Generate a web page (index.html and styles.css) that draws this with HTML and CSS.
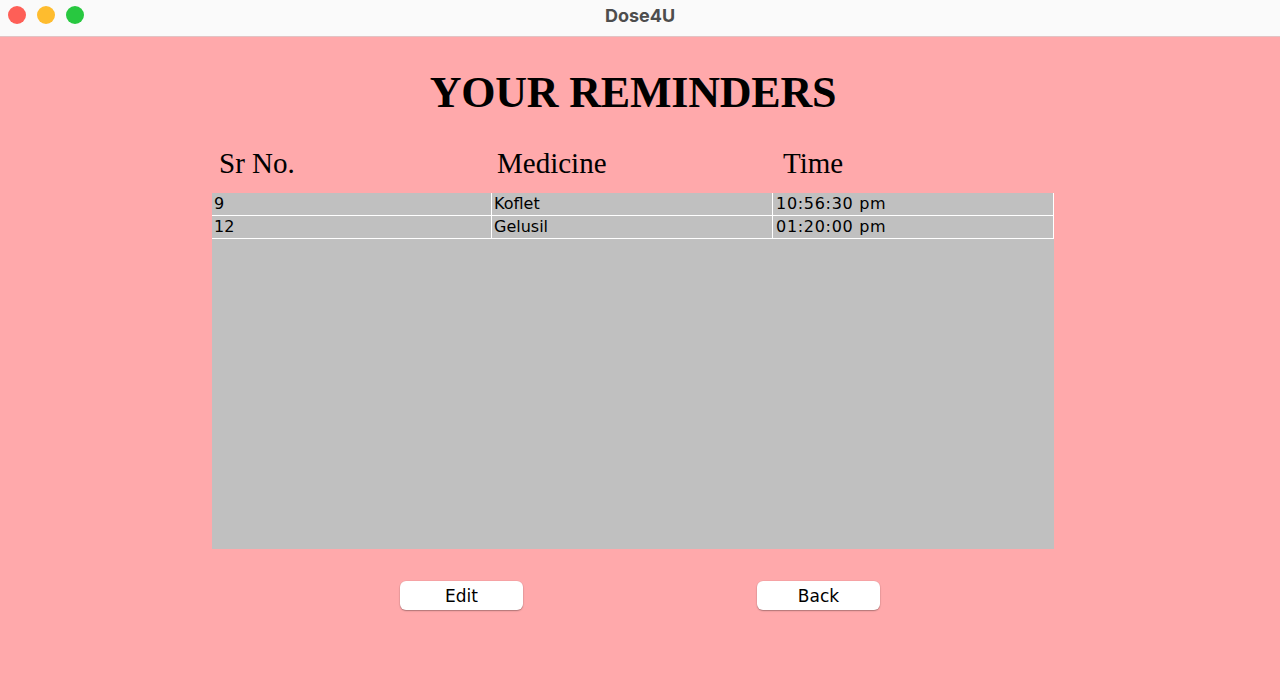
FILE: index.html
```html
<!DOCTYPE html>
<html lang="en">
<head>
<meta charset="utf-8">
<title>Dose4U</title>
<link rel="stylesheet" href="styles.css">
</head>
<body>
<div class="window">
  <header class="titlebar">
    <div class="lights">
      <span class="light red"></span>
      <span class="light yellow"></span>
      <span class="light green"></span>
    </div>
    <div class="app-title">Dose4U</div>
  </header>
  <main class="content">
    <section class="panel">
      <h1 class="heading">YOUR REMINDERS</h1>
      <div class="col-heads">
        <div class="col-head">Sr No.</div>
        <div class="col-head">Medicine</div>
        <div class="col-head">Time</div>
      </div>
      <div class="table">
        <div class="row">
          <div class="cell">9</div>
          <div class="cell">Koflet</div>
          <div class="cell time">10:56:30 pm</div>
        </div>
        <div class="row">
          <div class="cell">12</div>
          <div class="cell">Gelusil</div>
          <div class="cell time">01:20:00 pm</div>
        </div>
      </div>
    </section>
    <div class="actions">
      <button class="btn">Edit</button>
      <button class="btn">Back</button>
    </div>
  </main>
</div>
</body>
</html>
```
FILE: styles.css
```css
* { box-sizing: border-box; }
html, body { margin: 0; padding: 0; }
body {
  width: 1280px;
  height: 700px;
  overflow: hidden;
  background: #ffa9ab;
  font-family: "DejaVu Sans", sans-serif;
}
.window {
  display: flex;
  flex-direction: column;
  height: 700px;
}
.titlebar {
  position: relative;
  height: 37px;
  flex: 0 0 37px;
  background: #fafafa;
  border-bottom: 1px solid #e2c3c4;
  display: flex;
  align-items: center;
  justify-content: center;
}
.lights {
  position: absolute;
  left: 8px;
  top: 6px;
  display: flex;
  gap: 11px;
}
.light {
  width: 18px;
  height: 18px;
  border-radius: 50%;
  display: block;
}
.red { background: #fe5f57; }
.yellow { background: #febc2e; }
.green { background: #28c840; }
.app-title {
  font-family: "Inter", "Roboto", sans-serif;
  font-weight: 700;
  font-size: 18px;
  color: #4d4d4d;
  margin-top: -5px;
}
.content {
  flex: 1;
  padding-top: 25px;
}
.panel {
  width: 842px;
  margin-left: 212px;
}
.heading {
  margin: 0;
  padding-top: 1px;
  height: 60px;
  line-height: 60px;
  text-align: center;
  font-family: "Liberation Serif", serif;
  font-weight: 700;
  font-size: 44px;
  letter-spacing: -0.2px;
  color: #000;
}
.col-heads {
  margin-top: 23px;
  display: grid;
  grid-template-columns: 278px 286px 1fr;
  padding-left: 7px;
  height: 36px;
}
.col-head {
  font-family: "Liberation Serif", serif;
  font-size: 29px;
  line-height: 36px;
  color: #000;
}
.table {
  margin-top: 12px;
  height: 356px;
  background: #c0c0c0;
}
.row {
  display: grid;
  grid-template-columns: 280px 281px 281px;
}
.cell {
  height: 23px;
  line-height: 22px;
  padding-left: 2px;
  border-right: 1px solid #fff;
  border-bottom: 1px solid #fff;
  font-size: 16px;
  color: #000;
  white-space: nowrap;
}
.cell.time { padding-left: 3px; letter-spacing: 0.7px; }
.actions {
  margin-top: 32px;
  display: flex;
  justify-content: center;
  gap: 234px;
}
.btn {
  width: 123px;
  height: 29px;
  border: none;
  border-radius: 6px;
  background: #fff;
  box-shadow: 0 1px 1.5px rgba(0,0,0,0.3), 0 0 0 0.5px rgba(0,0,0,0.06);
  font-family: "DejaVu Sans", sans-serif;
  font-size: 17px;
  color: #000;
  padding: 0;
}
```
